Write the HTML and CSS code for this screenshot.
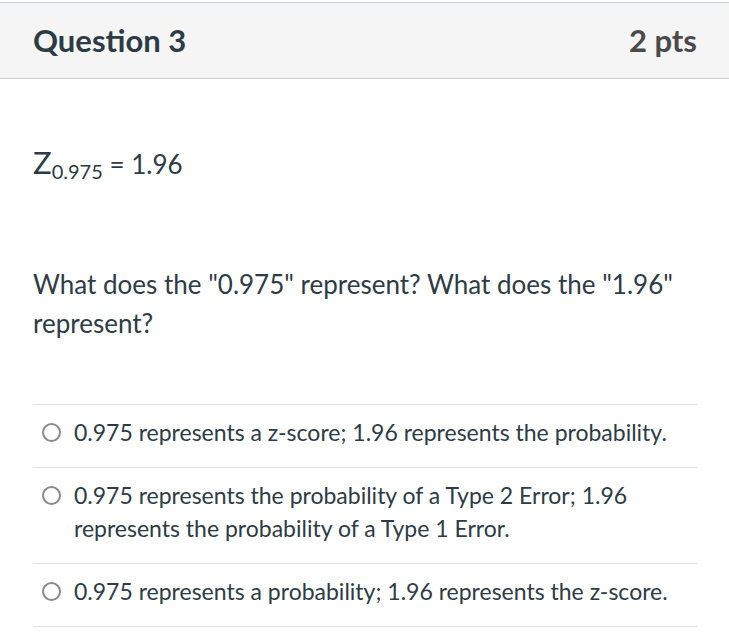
FILE: index.html
```html
<!DOCTYPE html>
<html>
<head>
<meta charset="utf-8">
<link rel="stylesheet" href="styles.css">
</head>
<body>
<div class="question">
  <div class="q-header">
    <span class="q-title">Question 3</span>
    <span class="q-points">2 pts</span>
  </div>
  <div class="q-body">
    <p class="formula"><span class="z">Z</span><sub>0.975</sub> = 1.96</p>
    <p class="prompt">What does the "0.975" represent? What does the "1.96" represent?</p>
    <div class="answers">
      <label class="answer"><span class="radio"></span><span class="a-text">0.975 represents a z-score; 1.96 represents the probability.</span></label>
      <label class="answer"><span class="radio"></span><span class="a-text">0.975 represents the probability of a Type 2 Error; 1.96 represents the probability of a Type 1 Error.</span></label>
      <label class="answer"><span class="radio"></span><span class="a-text">0.975 represents a probability; 1.96 represents the z-score.</span></label>
    </div>
  </div>
</div>
</body>
</html>
```
FILE: styles.css
```css
html, body {
  margin: 0;
  padding: 0;
  background: #fff;
}
body {
  font-family: Lato, "Noto Sans", sans-serif;
  color: #2d3b45;
  padding-top: 2px;
}
.question {
  width: 729px;
}
.q-header {
  display: flex;
  justify-content: space-between;
  align-items: center;
  box-sizing: border-box;
  height: 77px;
  padding: 0 32px 2px 33px;
  background: #f5f5f5;
  border-top: 1px solid #c7cdd1;
  border-bottom: 1px solid #c7cdd1;
}
.q-title {
  font-size: 31px;
  font-weight: 700;
  color: #2d3b45;
}
.q-points {
  font-size: 31px;
  font-weight: 700;
  color: #4a4a4a;
}
.q-body {
  padding: 0 32px 0 33px;
}
.formula {
  margin: 63px 0 0;
  font-size: 26px;
  line-height: 40px;
}
.formula .z {
  font-size: 31px;
}
.formula sub {
  font-size: 20px;
  vertical-align: -5px;
  line-height: 0;
}
.prompt {
  margin: 81px 0 0;
  font-size: 26px;
  line-height: 39px;
}
.answers {
  margin-top: 61px;
  border-top: 1px solid #e0e2e4;
}
.answer {
  display: flex;
  align-items: flex-start;
  padding: 11px 0 18px 9px;
  border-bottom: 1px solid #e0e2e4;
  font-size: 23px;
  line-height: 33px;
}
.radio {
  flex: none;
  box-sizing: border-box;
  width: 19px;
  height: 19px;
  border: 2px solid #8b8b8b;
  border-radius: 50%;
  margin: 7px 13px 0 0;
}
.a-text {
  flex: 1;
}
```
